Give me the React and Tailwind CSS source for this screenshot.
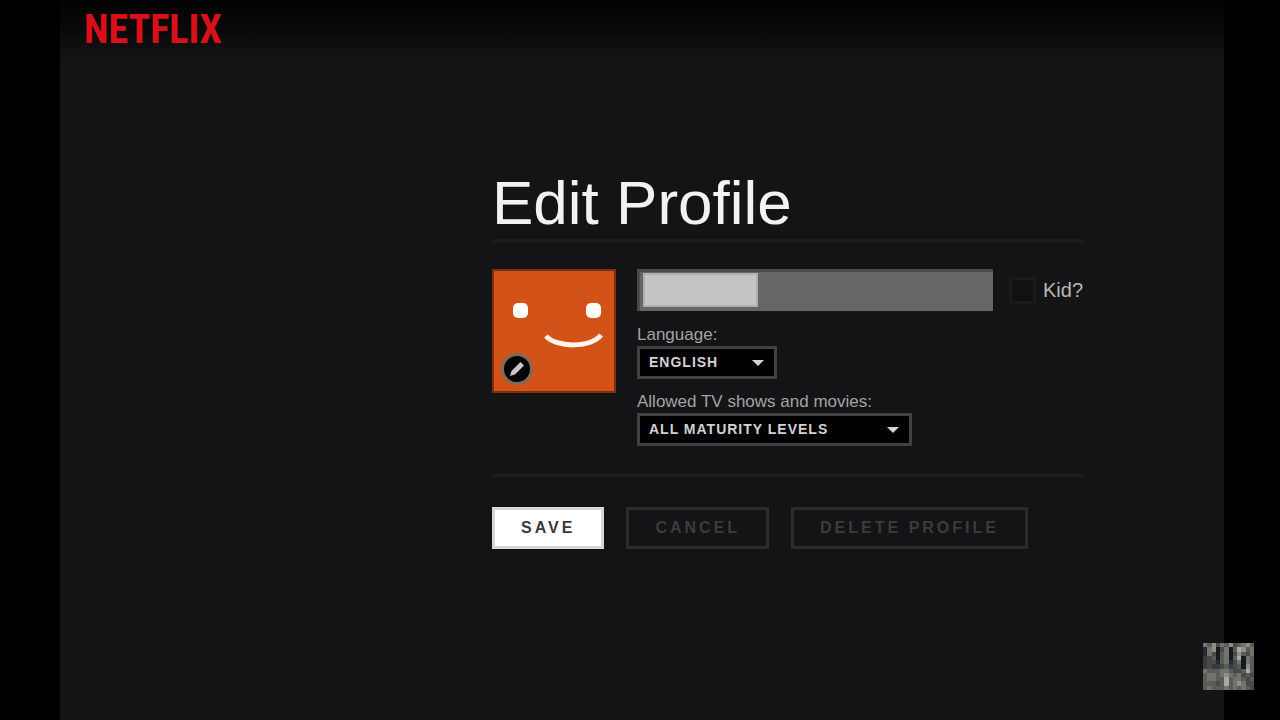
import React from "react";

const watermarkRows = [
  "657465745675",
  "267146158756",
  "264156147546",
  "345156158165",
  "344256246165",
  "343345345175",
  "655566544585",
  "566567656454",
  "566558566545",
  "555458567644",
  "565556565654",
];

const shades = {
  1: "#151a1e",
  2: "#252c31",
  3: "#393b3c",
  4: "#484a47",
  5: "#5b5c57",
  6: "#72736c",
  7: "#8d8e84",
  8: "#a9aa9d",
};

function Avatar() {
  return (
    <svg viewBox="0 0 124 124" className="block h-full w-full" aria-hidden="true">
      <rect width="124" height="124" fill="#7a3010" />
      <rect x="2" y="2" width="120" height="120" fill="#d35218" />
      <rect x="21" y="34" width="15" height="15" rx="5" fill="#fff" />
      <rect x="94" y="34" width="15" height="15" rx="5" fill="#fff" />
      <path
        d="M54 67 C64 79 99 79 109 66"
        fill="none"
        stroke="#fff4ec"
        strokeWidth="5"
      />
    </svg>
  );
}

function PencilIcon() {
  return (
    <svg viewBox="0 0 34 34" className="block h-full w-full" aria-hidden="true">
      <circle cx="17" cy="17" r="14.5" fill="#050505" stroke="#7d6a60" strokeWidth="3" />
      <path d="M10 24 L11.5 19 L20.5 10 L24 13.5 L15 22.5 Z" fill="#c8c8c8" />
    </svg>
  );
}

function SelectField({ id, label, value, width }) {
  return (
    <div className="flex flex-col items-start">
      <label htmlFor={id} className="text-[17px] leading-[22px] text-[#a3a3a3]">
        {label}
      </label>
      <div className={"relative " + width}>
        <select
          id={id}
          defaultValue={value}
          className="h-[33px] w-full appearance-none border-3 border-[#414042] bg-black pl-[9px] text-[14px] font-bold tracking-[1px] text-[#d2d2d2] outline-none"
        >
          <option>{value}</option>
        </select>
        <svg
          viewBox="0 0 12 8"
          className="pointer-events-none absolute top-[13px] right-[13px] h-2 w-3"
          aria-hidden="true"
        >
          <path d="M0 1 H12 L6 7 Z" fill="#d6d6d6" />
        </svg>
      </div>
    </div>
  );
}

export default function App() {
  return (
    <div className="relative min-h-screen bg-black pr-14 pl-[60px] font-['Liberation_Sans',Arial,sans-serif]">
      <div className="min-h-screen bg-[#141315]">
        <header className="flex h-[60px] items-center bg-linear-to-b from-[#030303] to-[#141315] px-6">
          <a
            href="#"
            className="font-['Roboto_Condensed','Open_Sans_Condensed','Noto_Sans_ExtraCondensed','Noto_Sans_Condensed','Liberation_Sans',sans-serif] text-[40px] leading-[60px] font-bold text-[#d90f19]"
          >
            NETFLIX
          </a>
        </header>

        <main className="pt-[106px] pl-[432px]">
          <form className="w-full max-w-[591px]" onSubmit={(e) => e.preventDefault()}>
            <h1 className="text-[62px] leading-[73px] text-[#f2f2f2]">Edit Profile</h1>

            <div className="flex gap-[21px] border-y-3 border-[#1c1b1e] pt-[27px] pb-[28px]">
              <div className="relative h-[124px] w-[124px] shrink-0">
                <Avatar />
                <button
                  type="button"
                  aria-label="Edit avatar"
                  className="absolute bottom-[7px] left-[8px] h-[34px] w-[34px]"
                >
                  <PencilIcon />
                </button>
              </div>

              <div className="flex grow flex-col">
                <div className="flex items-center">
                  <div className="relative grow">
                    <input
                      type="text"
                      aria-label="Profile name"
                      className="block h-[42px] w-full border-t-3 border-l-3 border-[#4a4a4b] bg-[#666666] px-2 text-lg text-white outline-none"
                    />
                    <span className="pointer-events-none absolute top-[4px] left-[6px] h-[34px] w-[115px] border-2 border-[#b0b0b0] bg-[#c6c5c6]" />
                  </div>
                  <label className="flex items-center gap-[7px] pl-4 text-[20px] leading-6 text-[#b8b8b8]">
                    <input
                      type="checkbox"
                      className="h-[27px] w-[27px] appearance-none border-3 border-[#1a191b] bg-[#111012]"
                    />
                    Kid?
                  </label>
                </div>

                <div className="mt-[13px] flex flex-col gap-3">
                  <SelectField
                    id="language"
                    label="Language:"
                    value="ENGLISH"
                    width="w-[140px]"
                  />
                  <SelectField
                    id="maturity"
                    label="Allowed TV shows and movies:"
                    value="ALL MATURITY LEVELS"
                    width="w-[275px]"
                  />
                </div>
              </div>
            </div>

            <div className="mt-[30px] flex gap-[22px] text-[16px] leading-[36px] tracking-[3px]">
              <button
                type="submit"
                className="border-3 border-[#d8d8d8] bg-white px-[26px] font-bold text-[#3a3a3a]"
              >
                SAVE
              </button>
              <button
                type="button"
                className="border-3 border-[#2c2b2d] px-[26px] font-bold text-[#3c3c3c]"
              >
                CANCEL
              </button>
              <button
                type="button"
                className="border-3 border-[#2c2b2d] px-[26px] font-bold text-[#3c3c3c]"
              >
                DELETE PROFILE
              </button>
            </div>
          </form>
        </main>
      </div>

      <svg
        viewBox="0 0 12 11"
        preserveAspectRatio="none"
        shapeRendering="crispEdges"
        className="absolute right-[26px] bottom-[30px] h-[47px] w-[51px]"
        aria-hidden="true"
      >
        {watermarkRows.map((row, y) =>
          row
            .split("")
            .map((shade, x) => (
              <rect key={x + "-" + y} x={x} y={y} width="1" height="1" fill={shades[shade]} />
            ))
        )}
      </svg>
    </div>
  );
}
